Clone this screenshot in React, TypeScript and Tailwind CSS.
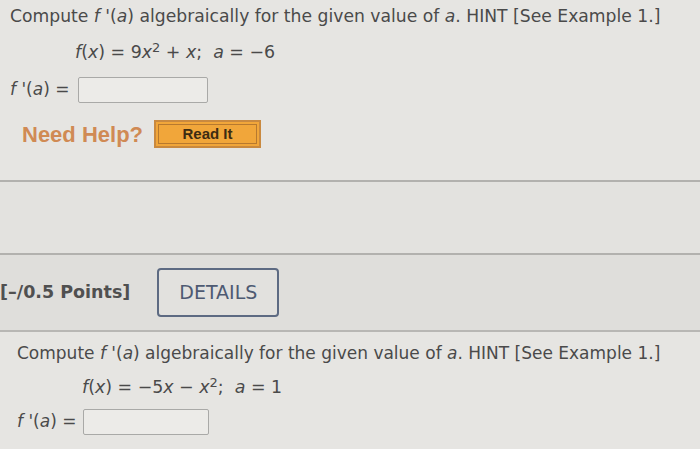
export default function App() {
  const sans = { fontFamily: '"DejaVu Sans", Verdana, sans-serif' };
  return (
    <div className="w-[700px] h-[449px] overflow-hidden bg-[#e6e5e2] text-[#4a4a4a]" style={sans}>
      {/* Question 1 */}
      <div className="h-[180px] pl-[10px] pt-[5px]">
        <p className="text-[17.2px] leading-[22px] whitespace-nowrap">
          Compute <i>f</i> '(<i>a</i>) algebraically for the given value of <i>a</i>. HINT [See Example 1.]
        </p>
        <p className="mt-[14px] pl-[65px] text-[17.4px] leading-[22px] whitespace-nowrap">
          <i>f</i>(<i>x</i>) = 9<i>x</i>
          <sup className="text-[13px]">2</sup> + <i>x</i>;&nbsp; <i>a</i> = −6
        </p>
        <div className="mt-[14px] flex items-center h-[26px]">
          <span className="text-[17px] w-[68px] whitespace-nowrap">
            <i>f</i> '(<i>a</i>) =
          </span>
          <div className="w-[130px] h-[26px] bg-[#ecebe8] border border-[#a9a9a7] rounded-[2px]" />
        </div>
        <div className="mt-[17px] ml-[12px] flex items-center h-[28px]">
          <span
            className="text-[22px] font-bold text-[#d08a54] whitespace-nowrap"
            style={{ fontFamily: '"Liberation Sans", Arial, sans-serif' }}
          >
            Need Help?
          </span>
          <button
            className="ml-[11px] w-[107px] h-[28px] border-2 border-[#c9893f] bg-[#f1a63a] p-[2px]"
            style={{ fontFamily: '"Liberation Sans", Arial, sans-serif' }}
          >
            <span className="flex h-full w-full items-center justify-center border border-[#b7792f] text-[15px] font-bold text-[#3d2c12]">
              Read It
            </span>
          </button>
        </div>
      </div>

      <div className="h-[73px] border-t-2 border-[#b2b1ae] bg-[#e3e2df]" />

      {/* Question 2 header */}
      <div className="h-[77px] border-t-2 border-[#b2b1ae] bg-[#dfdedb] flex items-center">
        <span className="text-[17.5px] font-bold text-[#505050] whitespace-nowrap">[–/0.5 Points]</span>
        <button className="ml-[27px] w-[122px] h-[49px] border-2 border-[#5d6a82] rounded-[4px] bg-[#e2e1de] text-[19px] text-[#4e5a72]">
          DETAILS
        </button>
      </div>

      {/* Question 2 */}
      <div className="border-t-2 border-[#b8b7b4] pl-[17px] pt-[10px]">
        <p className="text-[17px] leading-[22px] whitespace-nowrap">
          Compute <i>f</i> '(<i>a</i>) algebraically for the given value of <i>a</i>. HINT [See Example 1.]
        </p>
        <p className="mt-[12px] pl-[65px] text-[17.4px] leading-[22px] whitespace-nowrap">
          <i>f</i>(<i>x</i>) = −5<i>x</i> − <i>x</i>
          <sup className="text-[13px]">2</sup>;&nbsp; <i>a</i> = 1
        </p>
        <div className="mt-[11px] flex items-center h-[26px]">
          <span className="text-[17px] w-[66px] whitespace-nowrap">
            <i>f</i> '(<i>a</i>) =
          </span>
          <div className="w-[126px] h-[26px] bg-[#ecebe8] border border-[#a9a9a7] rounded-[2px]" />
        </div>
      </div>
    </div>
  );
}
